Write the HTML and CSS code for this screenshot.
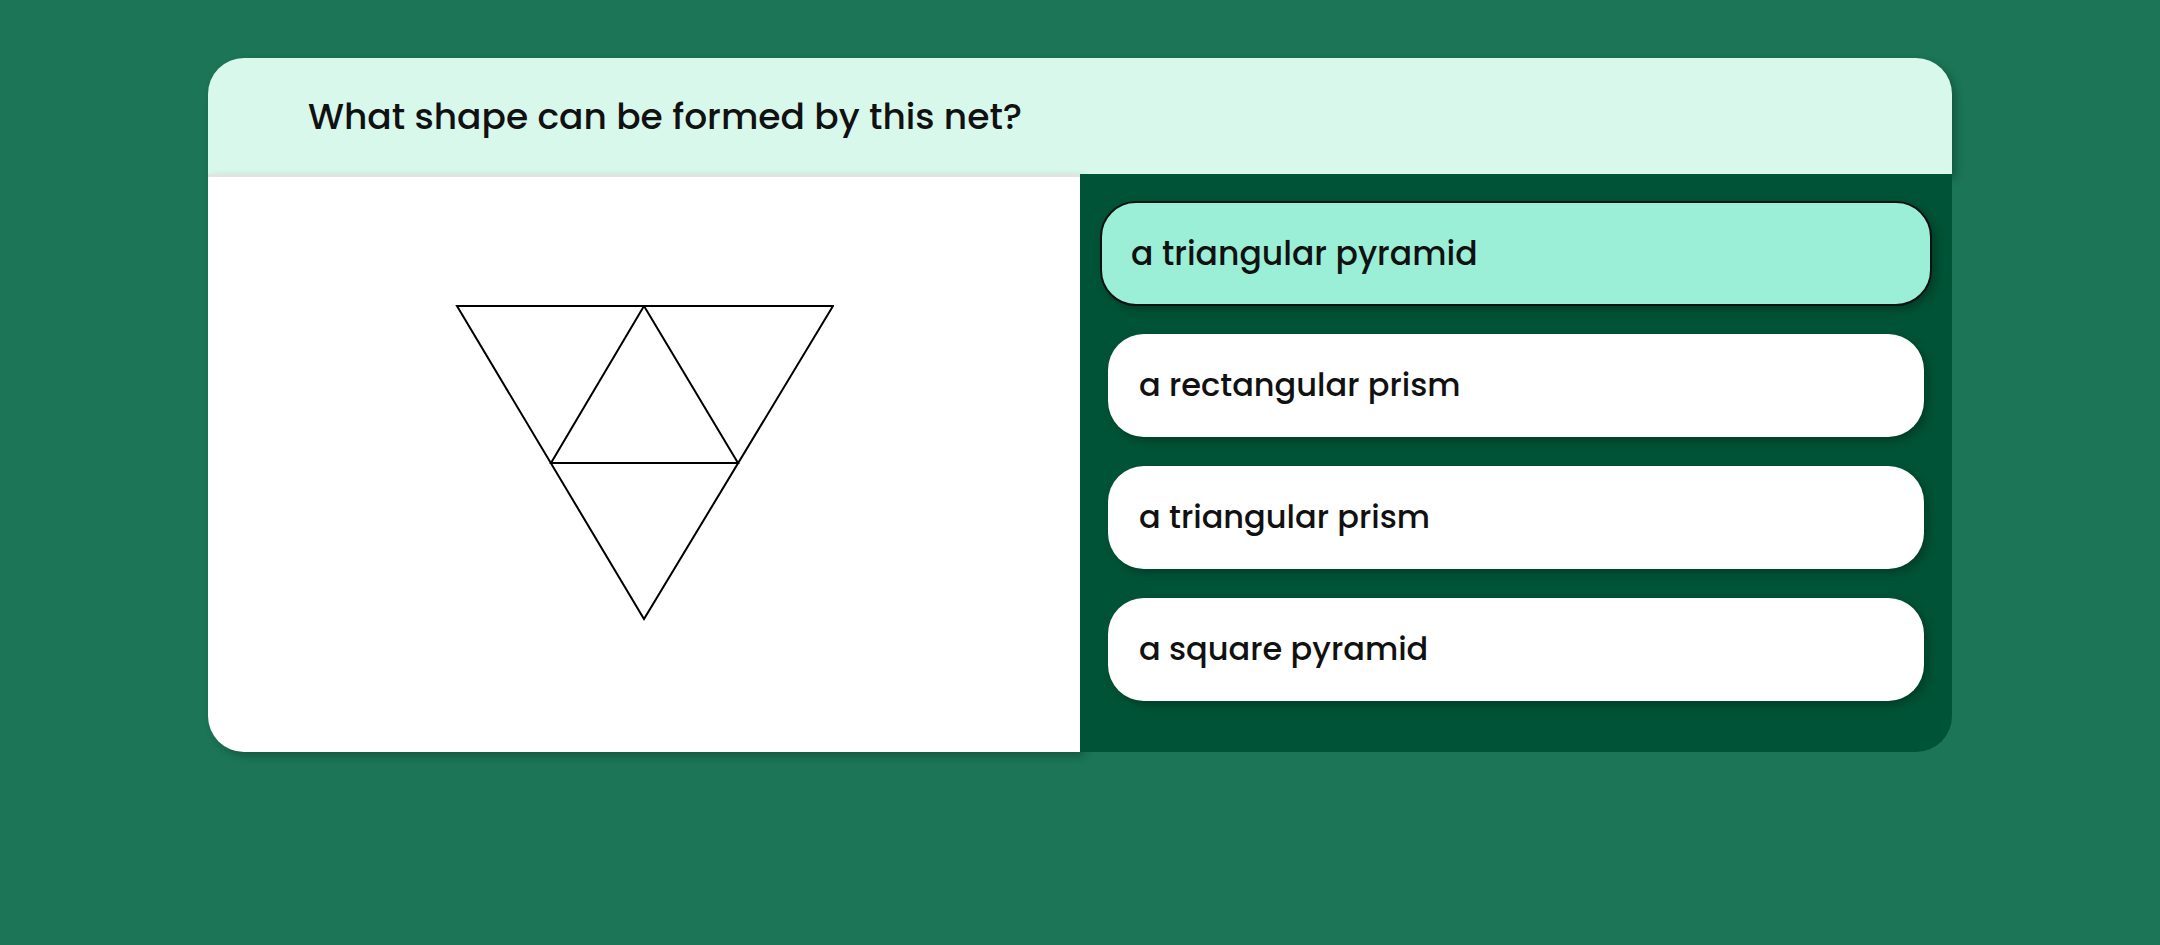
FILE: index.html
```html
<!DOCTYPE html>
<html lang="en">
<head>
    <meta charset="UTF-8">
    <meta name="viewport" content="width=device-width, initial-scale=1.0">
    <title>Shape Quiz</title>
    <link rel="stylesheet" href="styles.css">
</head>
<body>
    <main class="quiz">
        <div class="question">
            <h1>What shape can be formed by this net?</h1>
        </div>

        <div class="content">
            <div class="figure">
                <svg class="net" viewBox="0 0 380 316" role="img" aria-label="Net made of four triangles">
                    <path d="M3 1H379L190 314Z"/>
                    <path d="M190 1L97 158H284Z"/>
                </svg>
            </div>

            <div class="answers">
                <button type="button" class="answer selected" aria-pressed="true">a triangular pyramid</button>
                <button type="button" class="answer" aria-pressed="false">a rectangular prism</button>
                <button type="button" class="answer" aria-pressed="false">a triangular prism</button>
                <button type="button" class="answer" aria-pressed="false">a square pyramid</button>
            </div>
        </div>
    </main>

    <script>
        const answers = document.querySelectorAll(".answer");

        answers.forEach(answer => {
            answer.addEventListener("click", () => {
                answers.forEach(other => {
                    other.classList.toggle("selected", other === answer);
                    other.setAttribute("aria-pressed", other === answer);
                });
            });
        });
    </script>
</body>
</html>
```
FILE: styles.css
```css
* {
    box-sizing: border-box;
}

body {
    margin: 0;
    padding: 58px 208px;
    background-color: #1b7556;
    color: #111;
    font-family: Poppins, Inter, sans-serif;
    font-weight: 500;
}

.question {
    padding: 33px 100px 31px;
    background-color: #d8f8ec;
    border-radius: 36px 36px 0 0;
    box-shadow: 4px 4px 8px rgba(0, 0, 0, 0.25);
}

.question h1 {
    margin: 0;
    font-size: 36px;
    font-weight: 500;
    line-height: 52px;
}

.content {
    display: grid;
    grid-template-columns: 1fr 1fr;
    position: relative;
}

.figure {
    display: flex;
    align-items: center;
    justify-content: center;
    padding-bottom: 3px;
    background-color: #fff;
    border-top: 3px solid #e3e3e3;
    border-radius: 0 0 0 36px;
    box-shadow: 4px 4px 8px rgba(0, 0, 0, 0.25);
}

.net {
    width: 380px;
    max-width: 80%;
    fill: none;
    stroke: #000;
    stroke-width: 2;
}

.answers {
    display: flex;
    flex-direction: column;
    gap: 29px;
    position: relative;
    padding: 28px 28px 51px;
    background-color: #005336;
    border-radius: 0 0 36px 0;
}

.answer {
    padding: 27px 31px 29px;
    border: none;
    border-radius: 36px;
    background-color: #fff;
    box-shadow: 4px 4px 8px rgba(0, 0, 0, 0.25);
    color: inherit;
    font: inherit;
    font-size: 32px;
    line-height: 47px;
    text-align: left;
    cursor: pointer;
}

.answer.selected {
    margin: -1px -8px;
    padding: 27px 29px;
    border: 2px solid #111;
    background-color: #9aefd6;
    font-size: 33px;
}
```
